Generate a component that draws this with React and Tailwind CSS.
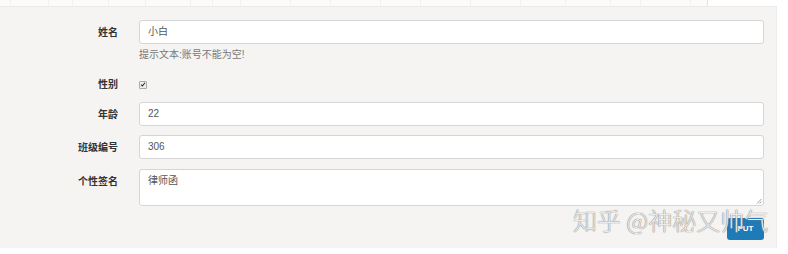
import React from "react";

const font = { fontFamily: '"Liberation Sans", "Noto Sans CJK SC", sans-serif' };

function Row({ label, children, className = "" }) {
  return (
    <div className={`flex items-center ${className}`}>
      <div className="w-[119px] pr-[1px] text-right text-[10px] font-bold text-[#333]">{label}</div>
      <div className="ml-[20px] flex-1">{children}</div>
    </div>
  );
}

function Input({ value }) {
  return (
    <div className="h-[24px] rounded-[3px] border border-[#d5d5d5] bg-white px-[8px] text-[10px] leading-[22px] text-[#555]">
      {value}
    </div>
  );
}

export default function App() {
  const lines = [10, 48, 72, 108, 145, 190, 212, 240, 290, 330, 380, 420, 470, 520, 565, 610, 640, 690];
  return (
    <div className="relative h-[254px] w-[788px] overflow-hidden bg-white" style={font}>
      <div className="relative h-[7px] w-[777px] border-b border-[#ebebeb] bg-white">
        <div className="relative h-[6px] w-[708px] border-r border-[#e2e2e2] bg-[#fbfbfb]">
          {lines.map((x) => (
            <div key={x} className="absolute top-0 h-[6px] w-px bg-[#f1f1f1]" style={{ left: x }} />
          ))}
        </div>
      </div>
      <div className="flex h-[241px] w-[777px] flex-col border-r border-[#ececec] bg-[#f5f4f2] pr-[12px] pt-[13px]">
        <Row label="姓名">
          <Input value="小白" />
        </Row>
        <div className="ml-[139px] mt-[5px] text-[10px] leading-[12px] text-[#777]">提示文本:账号不能为空!</div>
        <Row label="性别" className="mt-[16px]">
          <div className="flex h-[8px] w-[8px] items-center justify-center rounded-[1px] border border-[#aaa] bg-[#eee]">
            <svg viewBox="0 0 8 8" className="h-[7px] w-[7px]">
              <path d="M1.5 4.2 L3.2 6 L6.6 1.6" fill="none" stroke="#222" strokeWidth="1.4" />
            </svg>
          </div>
        </Row>
        <Row label="年龄" className="mt-[10px]">
          <Input value="22" />
        </Row>
        <Row label="班级编号" className="mt-[9px]">
          <Input value="306" />
        </Row>
        <div className="mt-[10px] flex items-start">
          <div className="w-[119px] pr-[1px] pt-[5px] text-right text-[10px] font-bold text-[#333]">个性签名</div>
          <div className="relative ml-[20px] h-[37px] flex-1 rounded-[3px] border border-[#d5d5d5] bg-white px-[8px] pt-[4px] text-[10px] leading-[14px] text-[#555]">
            律师函
            <svg viewBox="0 0 6 6" className="absolute bottom-[1px] right-[1px] h-[6px] w-[6px]">
              <path d="M1 5.5 L5.5 1 M3.5 5.5 L5.5 3.5" stroke="#888" strokeWidth="0.8" />
            </svg>
          </div>
        </div>
        <div className="mt-[12px] flex justify-end">
          <div className="flex h-[22px] w-[37px] items-center justify-center rounded-[3px] bg-[#1f7ab8] text-[8px] font-bold text-white">
            PUT
          </div>
        </div>
      </div>
      <div
        className="absolute left-[573px] top-[205px] whitespace-nowrap text-[24px] font-light leading-[30px] text-[#ececec]"
        style={{ fontFamily: '"Noto Sans CJK SC", sans-serif', textShadow: "0 0 1px #777, 0 0 1px #999" }}
      >
        知乎 @神秘又帅气
      </div>
    </div>
  );
}
